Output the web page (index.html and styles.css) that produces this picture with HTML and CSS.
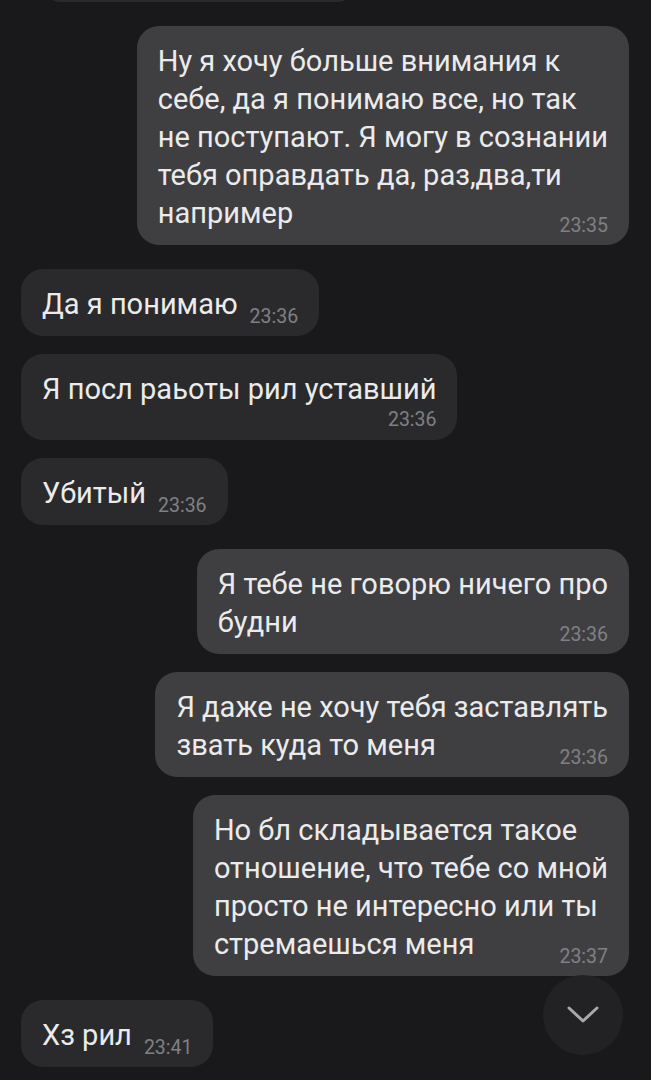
FILE: index.html
```html
<!DOCTYPE html>
<html>

<head>
    <meta charset="utf-8">
    <link rel="stylesheet" href="styles.css">
</head>

<body>

    <div class="chat">
        <div class="row in first">
            <div class="bubble cut"></div>
        </div>

        <div class="row out switch">
            <div class="bubble">
                <span class="text">Ну я хочу больше внимания к<br>себе, да я понимаю все, но так<br>не поступают. Я могу в сознании<br>тебя оправдать да, раз,два,ти<br>например</span>
                <span class="time">23:35</span>
            </div>
        </div>

        <div class="row in switch">
            <div class="bubble short">
                <span class="text">Да я понимаю</span>
                <span class="time">23:36</span>
            </div>
        </div>

        <div class="row in">
            <div class="bubble long">
                <span class="text">Я посл раьоты рил уставший</span>
                <span class="time">23:36</span>
            </div>
        </div>

        <div class="row in">
            <div class="bubble short">
                <span class="text">Убитый</span>
                <span class="time">23:36</span>
            </div>
        </div>

        <div class="row out switch">
            <div class="bubble">
                <span class="text">Я тебе не говорю ничего про<br>будни</span>
                <span class="time">23:36</span>
            </div>
        </div>

        <div class="row out">
            <div class="bubble">
                <span class="text">Я даже не хочу тебя заставлять<br>звать куда то меня</span>
                <span class="time">23:36</span>
            </div>
        </div>

        <div class="row out">
            <div class="bubble">
                <span class="text">Но бл складывается такое<br>отношение, что тебе со мной<br>просто не интересно или ты<br>стремаешься меня</span>
                <span class="time">23:37</span>
            </div>
        </div>

        <div class="row in switch">
            <div class="bubble short">
                <span class="text">Хз рил</span>
                <span class="time">23:41</span>
            </div>
        </div>
    </div>

    <button class="scroll-down" type="button">
        <svg width="32" height="18" viewBox="0 0 32 18">
            <polyline points="2,2 16,15 30,2" fill="none" stroke="#a9a9ac" stroke-width="3" stroke-linecap="round" stroke-linejoin="round" />
        </svg>
    </button>

</body>

</html>
```

FILE: styles.css
```css
body {
    margin: 0;
    height: 1080px;
    overflow: hidden;
    background-color: #19191b;
    font-family: Roboto, "Noto Sans", sans-serif;
    position: relative;
}

.chat {
    display: flex;
    flex-direction: column;
}

.row {
    display: flex;
    margin-top: 18px;
}

.row.switch {
    margin-top: 24px;
}

.row.first {
    margin-top: 0;
}

.row.in {
    justify-content: flex-start;
    padding-left: 21px;
}

.row.out {
    justify-content: flex-end;
    padding-right: 22px;
}

.bubble {
    display: grid;
    padding: 16px 21px 13px 21px;
    border-radius: 22px;
    color: #ebebeb;
    font-size: 29px;
    line-height: 38px;
}

.in .bubble {
    background-color: #2a2a2c;
}

.out .bubble {
    background-color: #3f3f42;
}

.bubble.cut {
    width: 316px;
    height: 40px;
    padding: 0;
    margin-top: -38px;
    margin-left: 20px;
}

.text {
    grid-area: 1 / 1;
    white-space: nowrap;
}

.time {
    grid-area: 1 / 1;
    justify-self: end;
    align-self: end;
    margin-bottom: -3px;
    font-size: 19.5px;
    line-height: 19px;
    color: #808084;
}

.bubble.short {
    grid-template-columns: auto auto;
    column-gap: 12px;
}

.bubble.short .time {
    grid-area: 1 / 2;
}

.bubble.long .time {
    grid-area: 2 / 1;
    margin-top: 2px;
    margin-bottom: -2px;
}

.scroll-down {
    position: absolute;
    left: 543px;
    top: 975px;
    width: 80px;
    height: 80px;
    border: none;
    border-radius: 50%;
    background-color: #222225;
    display: flex;
    align-items: center;
    justify-content: center;
    padding: 0;
}
```
